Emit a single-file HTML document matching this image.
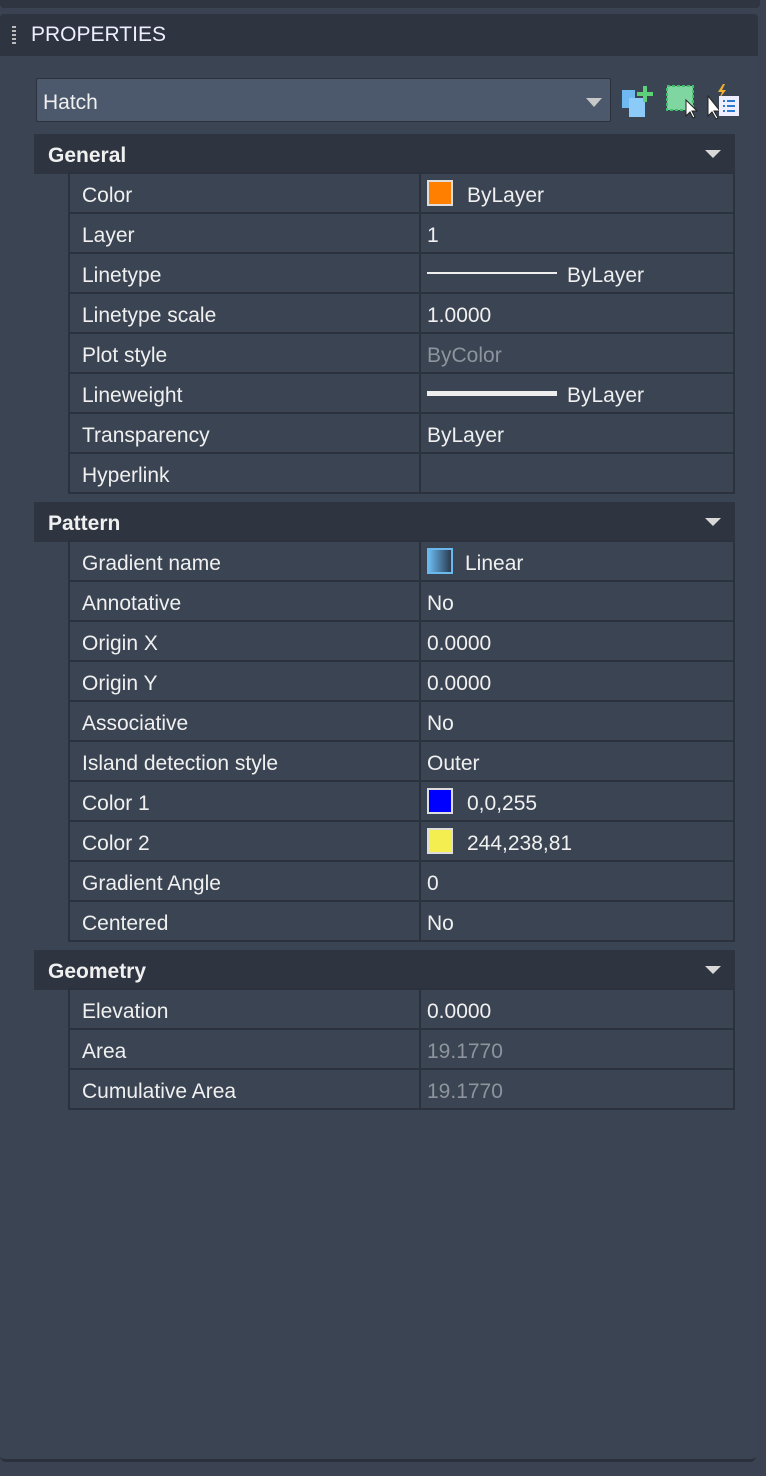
<!DOCTYPE html>
<html><head><meta charset="utf-8"><style>
*{margin:0;padding:0;box-sizing:border-box}
body{width:766px;height:1476px;background:#3b4352;font-family:"Liberation Sans",sans-serif;color:#f0f0f0;position:relative;overflow:hidden}
.topbar{position:absolute;left:0;top:0;width:760px;height:8px;background:#2f3541;border-radius:0 0 4px 4px}
.title{position:absolute;left:0;top:14px;width:758px;height:42px;background:#2e3440;border-radius:4px 4px 0 0}
.title span{position:absolute;left:31px;top:9px;font-size:21px;color:#eef}
.grip{position:absolute;left:12px;top:12px;width:4px;height:18px;background:repeating-linear-gradient(#bbb 0 2px,transparent 2px 4px)}
.panel{position:absolute;left:0;top:56px;width:756px;height:1406px;background:#3b4452;border-bottom:3px solid #2c323d;border-radius:0 0 6px 6px}
.dd{position:absolute;left:36px;top:78px;width:575px;height:44px;background:#4c596c;border:1px solid #2c323d;border-radius:2px}
.dd span{position:absolute;left:6px;top:12px;font-size:21px}
.dd i{position:absolute;right:8px;top:19px;border-left:8px solid transparent;border-right:8px solid transparent;border-top:9px solid #c8c8c8}
.hdr{position:absolute;left:34px;width:701px;height:40px;background:#2e3440}
.hdr b{position:absolute;left:14px;top:10px;font-size:21px}
.hdr i{position:absolute;right:14px;top:16px;border-left:8px solid transparent;border-right:8px solid transparent;border-top:8px solid #d8d8d8}
.rows{position:absolute;left:68px;width:667px;background:#2c323d;padding:0 2px 2px 2px}
.r{height:40px;display:flex}
.r div{background:#3b4452;margin-top:2px;height:38px;font-size:21px;line-height:38px;padding-left:12px;padding-top:3px}
.r .k{width:349px;margin-right:2px}
.r .v{flex:1;padding-left:6px;display:flex;align-items:center;padding-top:0}
.r .v t{position:relative;top:3px}
.g{color:#8d949e}
.sw{width:26px;height:26px;border:2px solid #ddd;margin-right:14px}
.ln{width:130px;margin-right:10px;background:#eee}
</style></head><body>
<div class="topbar"></div>
<div class="title"><div class="grip"></div><span>PROPERTIES</span></div>
<div class="panel"></div>
<div class="dd"><span>Hatch</span><i></i></div>
<svg style="position:absolute;left:620px;top:84px" width="120" height="36">
<rect x="2" y="6" width="13" height="18" fill="#6fb8f0"/><rect x="9" y="14" width="16" height="19" fill="#8ccaf7"/>
<path d="M25 2v16M17 10h16" stroke="#5fd07a" stroke-width="4"/>
<rect x="47" y="2" width="26" height="24" fill="#7fd6a0" stroke="#3fbf6a" stroke-width="2" stroke-dasharray="3 2"/>
<path d="M66 16l0 16 4-4 3 6 2-1-3-6 5 0z" fill="#fff" stroke="#222"/>
<path d="M88 12l0 20 4-4 4 7 2-1-4-7 6 0z" fill="#fff" stroke="#222"/>
<path d="M103 0l-5 8h4l-3 7 7-9h-4l3-6z" fill="#f4b030"/>
<rect x="99" y="12" width="20" height="20" fill="#eef"/><path d="M103 17h2M107 17h8M103 22h2M107 22h8M103 27h2M107 27h8" stroke="#2a7bd0" stroke-width="2"/>
</svg>

<div class="hdr" style="top:134px"><b>General</b><i></i></div>
<div class="rows" style="top:172px">
<div class="r"><div class="k">Color</div><div class="v"><span class="sw" style="background:#ff8000"></span><t>ByLayer</t></div></div>
<div class="r"><div class="k">Layer</div><div class="v"><t>1</t></div></div>
<div class="r"><div class="k">Linetype</div><div class="v"><span class="ln" style="height:2px"></span><t>ByLayer</t></div></div>
<div class="r"><div class="k">Linetype scale</div><div class="v"><t>1.0000</t></div></div>
<div class="r"><div class="k">Plot style</div><div class="v g"><t>ByColor</t></div></div>
<div class="r"><div class="k">Lineweight</div><div class="v"><span class="ln" style="height:5px"></span><t>ByLayer</t></div></div>
<div class="r"><div class="k">Transparency</div><div class="v"><t>ByLayer</t></div></div>
<div class="r"><div class="k">Hyperlink</div><div class="v"></div></div>
</div>

<div class="hdr" style="top:502px"><b>Pattern</b><i></i></div>
<div class="rows" style="top:540px">
<div class="r"><div class="k">Gradient name</div><div class="v"><span class="sw" style="background:linear-gradient(90deg,#6ab8ee,#2a3a50);border-color:#6ab8ee;margin-right:12px"></span><t>Linear</t></div></div>
<div class="r"><div class="k">Annotative</div><div class="v"><t>No</t></div></div>
<div class="r"><div class="k">Origin X</div><div class="v"><t>0.0000</t></div></div>
<div class="r"><div class="k">Origin Y</div><div class="v"><t>0.0000</t></div></div>
<div class="r"><div class="k">Associative</div><div class="v"><t>No</t></div></div>
<div class="r"><div class="k">Island detection style</div><div class="v"><t>Outer</t></div></div>
<div class="r"><div class="k">Color 1</div><div class="v"><span class="sw" style="background:#0000ff"></span><t>0,0,255</t></div></div>
<div class="r"><div class="k">Color 2</div><div class="v"><span class="sw" style="background:#f4ee51"></span><t>244,238,81</t></div></div>
<div class="r"><div class="k">Gradient Angle</div><div class="v"><t>0</t></div></div>
<div class="r"><div class="k">Centered</div><div class="v"><t>No</t></div></div>
</div>

<div class="hdr" style="top:950px"><b>Geometry</b><i></i></div>
<div class="rows" style="top:988px">
<div class="r"><div class="k">Elevation</div><div class="v"><t>0.0000</t></div></div>
<div class="r"><div class="k">Area</div><div class="v g"><t>19.1770</t></div></div>
<div class="r"><div class="k">Cumulative Area</div><div class="v g"><t>19.1770</t></div></div>
</div>
</body></html>
